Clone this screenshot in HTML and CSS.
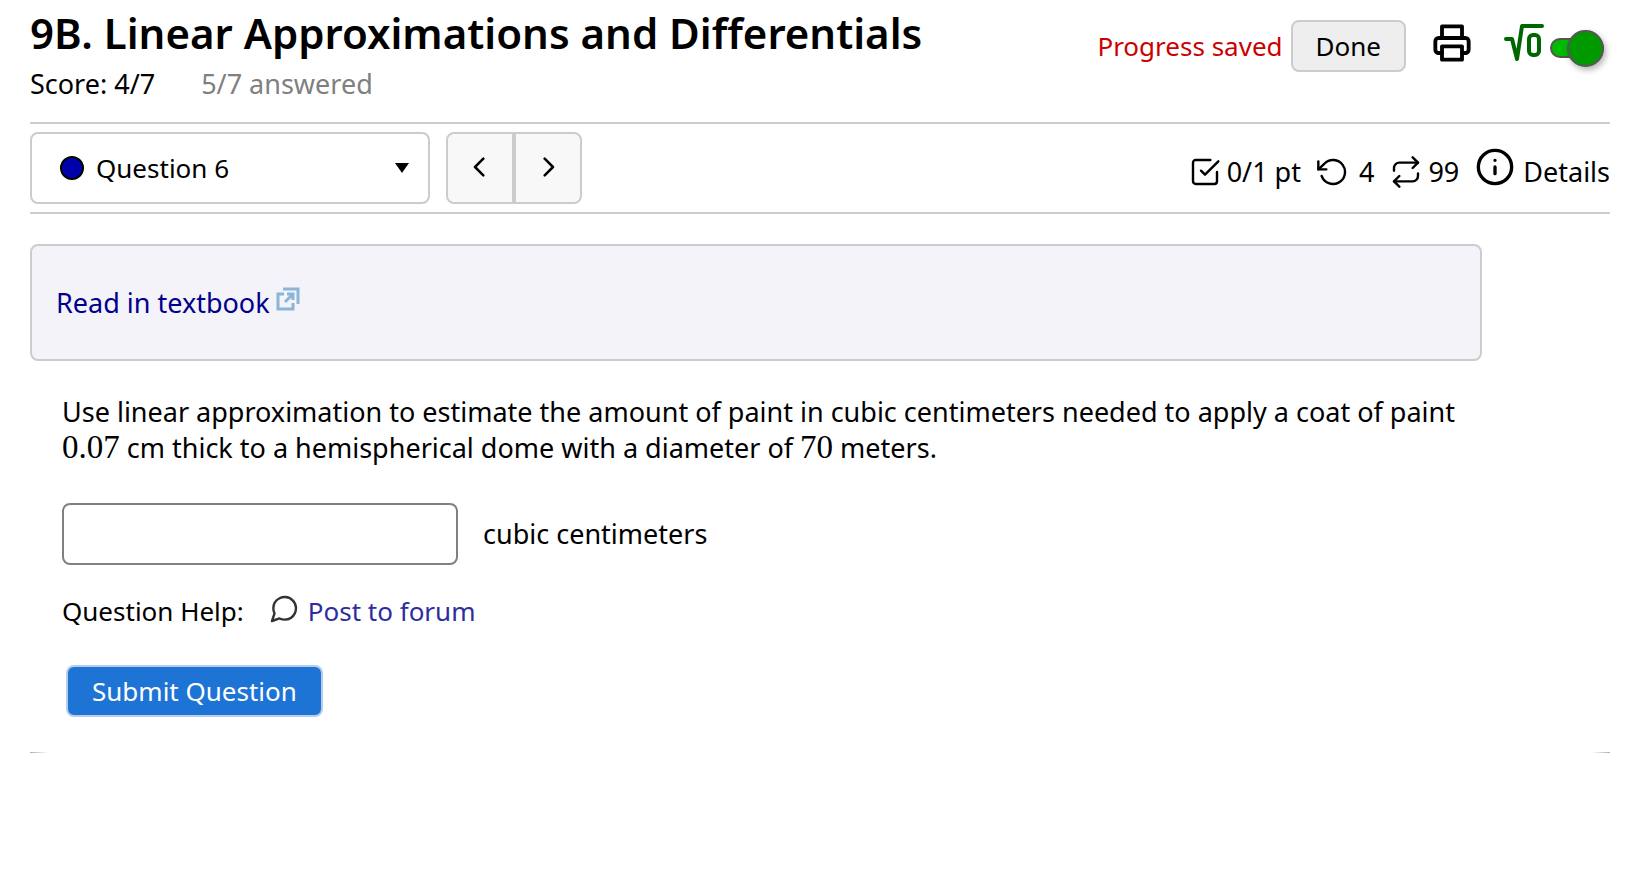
FILE: index.html
```html
<!DOCTYPE html>
<html lang="en">
<head>
  <meta charset="UTF-8">
  <meta name="viewport" content="width=device-width, initial-scale=1.0">
  <title>9B. Linear Approximations and Differentials</title>
  <link rel="stylesheet" href="styles.css">
</head>
<body>
  <header class="header">
    <div class="header-title">
      <h1>9B. Linear Approximations and Differentials</h1>
      <div class="score">
        <span>Score: 4/7</span>
        <span class="answered">5/7 answered</span>
      </div>
    </div>
    <div class="header-tools">
      <span class="saved">Progress saved</span>
      <button class="done" type="button">Done</button>
      <button class="icon-button print" type="button" aria-label="Print">
        <svg class="icon-large" viewBox="0 0 24 24">
          <path d="M6 9V2h12v7"/>
          <path d="M6 18H4a2 2 0 0 1-2-2v-5a2 2 0 0 1 2-2h16a2 2 0 0 1 2 2v5a2 2 0 0 1-2 2h-2"/>
          <path d="M6 14h12v8H6z"/>
        </svg>
      </button>
      <label class="math-toggle">
        <svg class="math-icon" viewBox="0 0 40 40" aria-label="Equation editor">
          <path d="M2 15h6l5 20 5-33h20"/>
          <rect x="25" y="11" width="10" height="20" rx="4"/>
        </svg>
        <input class="switch" type="checkbox" checked>
      </label>
    </div>
  </header>

  <nav class="question-nav">
    <div class="question-select">
      <span class="dot"></span>
      <select aria-label="Question">
        <option>Question 6</option>
      </select>
      <svg class="caret" viewBox="0 0 16 12"><path d="M1 1h14L8 11z"/></svg>
    </div>
    <div class="prev-next">
      <button type="button" aria-label="Previous">
        <svg class="chevron" viewBox="0 0 24 24"><path d="M16 2L6 12l10 10"/></svg>
      </button>
      <button type="button" aria-label="Next">
        <svg class="chevron" viewBox="0 0 24 24"><path d="M8 2l10 10L8 22"/></svg>
      </button>
    </div>
    <div class="info">
      <span class="info-item">
        <svg class="icon" viewBox="0 0 24 24">
          <path d="M9 11l3 3L22 4"/>
          <path d="M21 12v7a2 2 0 0 1-2 2H5a2 2 0 0 1-2-2V5a2 2 0 0 1 2-2h11"/>
        </svg>
        0/1 pt
      </span>
      <span class="info-item tries">
        <svg class="icon" viewBox="0 0 24 24">
          <path d="M1 4v6h6"/>
          <path d="M3.51 15a9 9 0 1 0 2.13-9.36L1 10"/>
        </svg>
        4
      </span>
      <span class="info-item">
        <svg class="icon" viewBox="0 0 24 24">
          <path d="M17 1l4 4-4 4"/>
          <path d="M3 11V9a4 4 0 0 1 4-4h14"/>
          <path d="M7 23l-4-4 4-4"/>
          <path d="M21 13v2a4 4 0 0 1-4 4H3"/>
        </svg>
        99
      </span>
      <button class="icon-button details" type="button">
        <svg class="icon-large" viewBox="0 0 24 24">
          <circle cx="12" cy="12" r="10"/>
          <path d="M12 16v-4M12 8h.01"/>
        </svg>
        Details
      </button>
    </div>
  </nav>

  <main>
    <div class="textbook">
      <a href="#">Read in textbook</a>
      <svg class="external" viewBox="0 0 24 24">
        <path d="M8 7H2v15h15v-6"/>
        <path d="M7 2h15v15"/>
        <path d="M9 15l8-8M11 7h6v6"/>
      </svg>
    </div>

    <form class="question">
      <p>Use linear approximation to estimate the amount of paint in cubic centimeters needed to apply a coat of paint <span class="math">0.07</span> cm thick to a hemispherical dome with a diameter of <span class="math">70</span> meters.</p>
      <div class="answer">
        <input id="answer" type="text">
        <label for="answer">cubic centimeters</label>
      </div>
      <div class="help">
        <span>Question Help:</span>
        <a href="#">
          <svg class="icon" viewBox="0 0 24 24">
            <path d="M21 11.5a8.38 8.38 0 0 1-.9 3.8 8.5 8.5 0 0 1-7.6 4.7 8.38 8.38 0 0 1-3.8-.9L3 21l1.9-5.7a8.38 8.38 0 0 1-.9-3.8 8.5 8.5 0 0 1 4.7-7.6 8.38 8.38 0 0 1 3.8-.9h.5a8.48 8.48 0 0 1 8 8v.5z"/>
          </svg>
          Post to forum
        </a>
      </div>
      <button class="submit" type="submit">Submit Question</button>
    </form>
  </main>
  <hr>
</body>
</html>
```
FILE: styles.css
```css
* {
  box-sizing: border-box;
}
body {
  margin: 0;
  padding: 0 30px;
  background: #fff;
  color: #000;
  font: 27px/36px "Trebuchet MS", "Noto Sans", sans-serif;
}
button,
input,
select {
  font: inherit;
  color: inherit;
}
a {
  text-decoration: none;
}
svg {
  flex: none;
  fill: none;
  stroke: currentColor;
  stroke-width: 2;
  stroke-linecap: round;
  stroke-linejoin: round;
}
.icon {
  width: 32px;
  height: 32px;
  stroke-width: 1.8;
}
.icon-large {
  width: 40px;
  height: 40px;
}
.icon-button {
  display: flex;
  align-items: center;
  padding: 0;
  border: 0;
  background: none;
}

/* header */
.header {
  display: flex;
  justify-content: space-between;
  height: 122px;
}
h1 {
  margin: 0;
  padding-top: 5px;
  font-size: 42px;
  font-weight: 600;
  line-height: 55px;
}
.score {
  display: flex;
  gap: 46px;
  padding-top: 6px;
}
.answered {
  color: #808080;
}
.header-tools {
  display: flex;
  align-items: center;
  height: 52px;
  margin-top: 20px;
  font-size: 26px;
}
.saved {
  color: #c00;
}
.done {
  height: 52px;
  margin-left: 8px;
  padding: 0 23px;
  border: 2px solid #ccc;
  border-radius: 8px;
  background: #eee;
}
.print {
  margin: 0 32px 6px 26px;
}
.print svg {
  stroke-width: 2.3;
}
.math-toggle {
  display: flex;
  align-items: center;
  margin-right: 6px;
}
.math-icon {
  width: 40px;
  height: 40px;
  margin-bottom: 4px;
  color: #060;
  stroke-width: 4;
}
.switch {
  display: flex;
  align-items: center;
  justify-content: flex-end;
  width: 54px;
  height: 20px;
  margin: 4px 0 0 6px;
  appearance: none;
  border: 2px solid #555;
  border-radius: 10px;
  background: #0b0;
}
.switch::before {
  content: "";
  flex: none;
  width: 33px;
  height: 33px;
  margin-right: -2px;
  border: 2px solid #555;
  border-radius: 50%;
  background: #090;
  box-shadow: 2px 3px 6px rgba(0, 0, 0, .3);
}

/* question nav */
.question-nav {
  display: flex;
  align-items: center;
  padding: 8px 0;
  border-top: 2px solid #ccc;
  border-bottom: 2px solid #ccc;
}
.question-select {
  display: flex;
  align-items: center;
  width: 400px;
  height: 72px;
  padding: 0 18px 0 28px;
  border: 2px solid #ccc;
  border-radius: 8px;
  font-size: 26px;
}
.question-select select {
  flex: 1;
  height: 40px;
  padding: 0 0 0 12px;
  appearance: none;
  border: 0;
  background: none;
}
.dot {
  width: 24px;
  height: 24px;
  border: 2px solid #000;
  border-radius: 50%;
  background: #00a;
}
.caret {
  width: 16px;
  height: 12px;
  fill: #000;
  stroke: none;
}
.prev-next {
  display: flex;
  margin-left: 16px;
}
.prev-next button {
  display: flex;
  align-items: center;
  justify-content: center;
  width: 68px;
  height: 72px;
  padding: 0 0 2px;
  border: 2px solid #ccc;
  border-radius: 8px 0 0 8px;
  background: #f8f8f8;
}
.prev-next button + button {
  border-radius: 0 8px 8px 0;
}
.chevron {
  width: 20px;
  height: 20px;
  stroke-width: 3;
}
.info {
  display: flex;
  align-items: center;
  gap: 16px;
  margin-left: auto;
  padding-top: 8px;
}
.info-item {
  display: flex;
  align-items: center;
  gap: 6px;
}
.tries {
  gap: 10px;
}
.details {
  gap: 8px;
}
.details svg {
  margin-bottom: 10px;
}

/* question */
main {
  max-width: 1452px;
}
.textbook {
  display: flex;
  align-items: center;
  gap: 6px;
  height: 117px;
  margin-top: 30px;
  padding: 0 24px;
  border: 2px solid #ccc;
  border-radius: 8px;
  background: #f3f3f9;
}
.textbook a {
  color: #00008b;
}
.external {
  width: 24px;
  height: 24px;
  margin-bottom: 8px;
  color: #8ab6d8;
  stroke-width: 3;
  stroke-linecap: butt;
  stroke-linejoin: miter;
}
.question {
  padding: 33px 0 35px 32px;
}
.question p {
  margin: 0;
}
.math {
  font: 33px/1 "Liberation Serif", serif;
}
.answer {
  display: flex;
  align-items: center;
  gap: 25px;
  margin-top: 37px;
}
.answer input {
  width: 396px;
  height: 62px;
  padding: 0 12px;
  border: 2px solid #808080;
  border-radius: 8px;
}
.help {
  display: flex;
  gap: 24px;
  margin: 28px 0 36px;
  font-size: 26px;
}
.help a {
  display: flex;
  align-items: center;
  gap: 8px;
  color: #2d2da0;
}
.help svg {
  margin-bottom: 4px;
  color: #333;
}
.submit {
  height: 52px;
  margin-left: 4px;
  padding: 0 24px;
  border: 2px solid #b5cdea;
  border-radius: 8px;
  background: #1e74d4;
  color: #fff;
  font-size: 26px;
}

/* only the two ends of the rule are visible */
hr {
  height: 1px;
  margin: 0;
  border: 0;
  background: linear-gradient(to right, #aaa, #fff 18px, #fff calc(100% - 18px), #aaa);
}
```
